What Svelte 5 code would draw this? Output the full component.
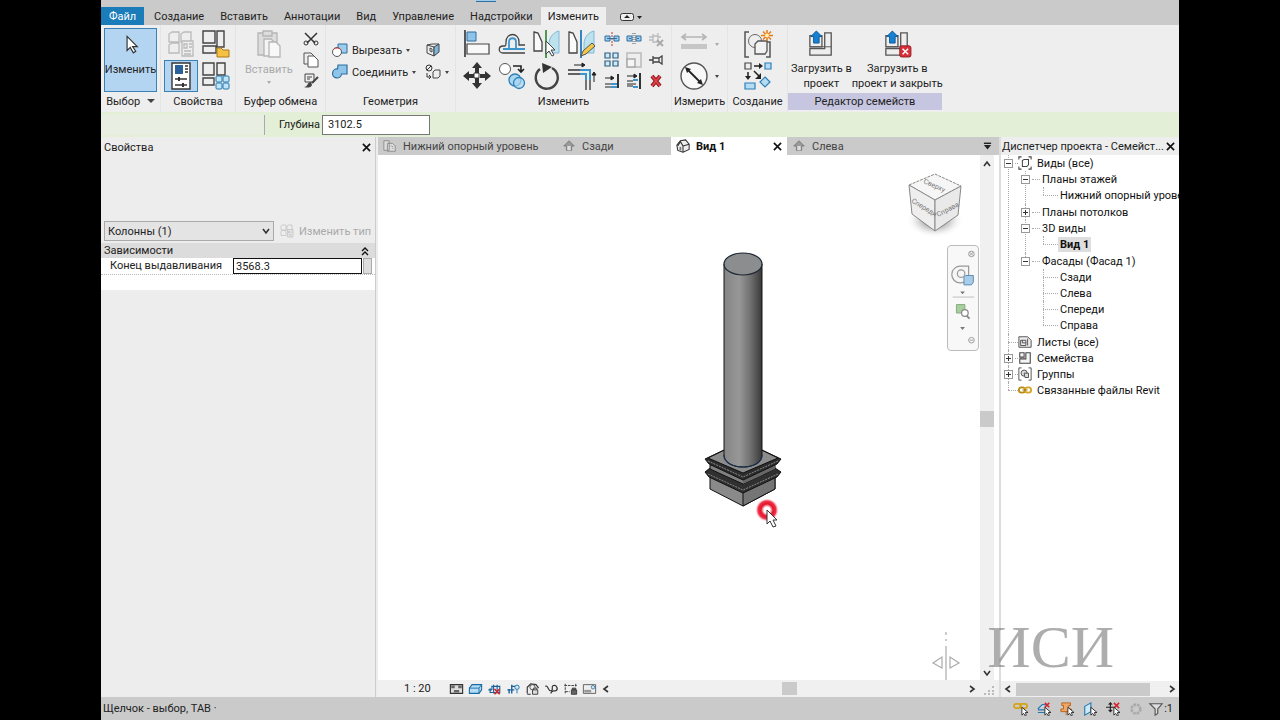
<script>
	let depth = $state('3102.5');
	let extrusionEnd = $state('3568.3');
	let category = $state('Колонны (1)');

	const menu = ['Создание', 'Вставить', 'Аннотации', 'Вид', 'Управление', 'Надстройки'];

	const house = '<path d="M2 8 8 2l6 6h-3v5H5V8z" fill="#999" stroke="#777"/><path d="M6 8h4v5H6z" fill="#ddd"/>';
	const pointer = '<path d="M9 6v9l2-2 2 3 1-1-1-3h3z" fill="#fff" stroke="#222"/>';
	const upload =
		'<path d="M2 5h13v12H2zM18 2h7v24H2v-7h16z" fill="#eee" stroke="#555" stroke-width="1.4"/><path d="M2 17h23" stroke="#555"/><path d="M9 0 15 6h-3v7H6V6H3z" fill="#1680d2" stroke="#0c5798"/>';

	const icons = {
		cursor: '<path d="M9 3v18l4-4 4 7 3-2-4-6h6z" fill="#fff" stroke="#333" stroke-width="1.5"/>',
		types:
			'<g fill="#eee" stroke="#bbb" stroke-width="1.3"><path d="M2 4l3-2h7v10H2zM14 4l3-2h7v10H14zM2 15l3-2h7v10H2z"/><path d="M15 11h11v15H15z"/><path d="M17 14h3v4h-3zM22 14h3M22 17h3M17 21h7M17 24h7"/></g>',
		family:
			'<g fill="#eee" stroke="#444" stroke-width="1.4"><path d="M1 1h12v12H1zM15 1h7v16h-7zM1 16h13v7H1z"/></g><path d="M15 18h4l2 2h6v7H15z" fill="#f6c044" stroke="#a87a14"/>',
		palette:
			'<path d="M5 1h18v26H5z" fill="#fff" stroke="#333" stroke-width="1.4"/><path d="M8 3h8v9H8z" fill="#2b6199"/><path d="M18 4h3M18 7h3M18 10h3M8 17h12M8 23h12" stroke="#333" stroke-width="1.4"/><path d="M12 15v4M16 21v4" stroke="#333" stroke-width="2"/>',
		parameters:
			'<g fill="#eee" stroke="#444" stroke-width="1.4"><path d="M1 1h11v12H1zM15 1h8v12h-8zM1 16h11v7H1z"/></g><g fill="#bfe3f8" stroke="#2779ad"><rect x="14" y="14" width="6" height="6" rx="1"/><rect x="21" y="14" width="6" height="6" rx="1"/><rect x="14" y="21" width="6" height="6" rx="1"/><rect x="21" y="21" width="6" height="6" rx="1"/></g>',
		paste:
			'<g fill="#ddd" stroke="#b5b5b5" stroke-width="1.3"><path d="M3 3h19v22H3z"/><path d="M8 1h9v5H8z"/><path d="M9 9h7l4 4v13H9z" fill="#f4f4f4"/><path d="M14 12h7l4 4v11H14z" fill="#f8f8f8"/></g>',
		cut: '<path d="M2 2l10 10M14 2 4 12" stroke="#333" stroke-width="1.5"/><circle cx="3" cy="12" r="2" fill="none" stroke="#333"/><circle cx="13" cy="12" r="2" fill="none" stroke="#333"/>',
		copy: '<path d="M1 1h7l3 3v8H1z" fill="#eee" stroke="#555"/><path d="M5 4h6l4 4v7H5z" fill="#fff" stroke="#555"/>',
		brush: '<path d="M2 1h9v8H2zM4 4h5M4 6h3" fill="#eee" stroke="#444"/><path d="M15 4 9 10" stroke="#444" stroke-width="2"/><path d="M1 14c4 0 3-5 7-5l1 3c-1 3-5 3-8 2z" fill="#444"/>',
		cutGeom: '<path d="M6 2h9v9H6z" fill="#9dccec" stroke="#2f6f9f"/><circle cx="5" cy="10" r="4.5" fill="#fff" stroke="#555"/><path d="M2 7a5 5 0 0 1 7 1" stroke="#c44" fill="none"/>',
		joinGeom: '<path d="M6 1h9v9H9.500a4.500 4.500 0 1 1-4-5z" fill="#8fc4ea" stroke="#2f6f9f" stroke-width="1.2"/>',
		face: '<path d="M2 3l7 2v9l-7-3z" fill="#eee" stroke="#444"/><path d="M9 5l5-3v8l-5 4z" fill="#7db6dd" stroke="#444"/><path d="M2 3l5-1 7 0" fill="none" stroke="#444"/><path d="M5 6l2 1v3l-2-1z" fill="#fff" stroke="#444"/>',
		split: '<circle cx="4" cy="4" r="3" fill="none" stroke="#333"/><path d="M2 6l4-4M2 9v4h4M4 11l2 2-2 2" fill="none" stroke="#333"/><path d="M8 8l2-2h5v6l-2 2H8z" fill="#eee" stroke="#444"/>',
		align: '<path d="M2 0v27" stroke="#333" stroke-width="1.600"/><path d="M4 2h9v9H4z" fill="#8fc4ea" stroke="#2f6f9f"/><path d="M4 14h22v10H4z" fill="#f8f8f8" stroke="#444" stroke-width="1.2"/>',
		offset: '<path d="M27 23H5c-5 0-5-7 0-7h2c1 0 1-1 1-4 0-10 13-10 13 0v3h6" fill="none" stroke="#444" stroke-width="1.300"/><path d="M27 19H5M11 19v-7c0-5 7-5 7 0v7" fill="none" stroke="#3c94cb" stroke-width="1.800"/>',
		mirrorPick: '<path d="M1 2l4 1 4 9v9H1z" fill="#fafafa" stroke="#444" stroke-width="1.300"/><path d="M26 1v22H16v-9c0-7 5-12 10-13z" fill="#bde2ee" stroke="#7fb9d8"/><path d="M13 0v28" stroke="#4c9a53" stroke-width="2"/><path d="M13 11v13l3-3 3 5 2-1-3-5h4z" fill="#fff" stroke="#444"/>',
		mirrorDraw: '<path d="M1 2l4 1 4 9v11H1z" fill="#fafafa" stroke="#444" stroke-width="1.300"/><path d="M26 1v22H16v-9c0-7 5-12 10-13z" fill="#bde2ee" stroke="#7fb9d8"/><path d="M13 0v28" stroke="#3685c0" stroke-width="2"/><path d="M13 26l2-5 9-8 3 3-9 8z" fill="#f2c84b" stroke="#555"/>',
		move: '<path d="M14 0l5 6h-3v5h-4V6H9zM14 27l5-6h-3v-5h-4v5H9zM0 14l6-5v3h5v4H6v3zM28 14l-6-5v3h-5v4h5v3z" fill="#333"/><path d="M11 11h5v5h-5z" fill="#fff" stroke="#333"/>',
		copyObj: '<circle cx="7" cy="7" r="5.500" fill="#fff" stroke="#555"/><path d="M15 4h8v5M20 7l3 3 3-3" fill="none" stroke="#222" stroke-width="1.600"/><circle cx="17" cy="18" r="6" fill="#a8d7f3" stroke="#2f7fb5" stroke-width="1.300"/><circle cx="21" cy="21" r="5.500" fill="#a8d7f3" fill-opacity=".7" stroke="#2f7fb5" stroke-width="1.300"/>',
		rotate: '<path d="M19 6a11 11 0 1 1-12 1" fill="none" stroke="#444" stroke-width="2.400"/><path d="M9 1l10 4-9 6z" fill="#333"/>',
		trim: '<path d="M0 8h12M0 12h12M18 18v10M22 18v10" stroke="#333" stroke-width="1.300"/><path d="M12 8h10v10M12 12h6v6" fill="none" stroke="#3c94cb" stroke-width="2"/><path d="M6 3h10M14 1l3 2-3 2zM26 20V11M24 13l2-3 2 3z" fill="#222" stroke="#222"/>',
		splitEl: '<path d="M1 5h5v5H1zM10 5h5v5h-5z" fill="#9dccec" stroke="#2f6f9f"/><path d="M8 1v14" stroke="#b33" stroke-dasharray="2 1"/><path d="M3 7.500h10" stroke="#2f6f9f"/>',
		splitGap: '<path d="M1 5h5v5H1zM10 5h5v5h-5z" fill="#9dccec" stroke="#2f6f9f"/><path d="M7 2v11M9 2v11" stroke="#555" stroke-dasharray="1 1"/><path d="M3 7.500h2M11 7.500h2" stroke="#2f6f9f"/>',
		unpin: '<path d="M1 6h4V3v9V9H1M5 5h5V2v9H5M10 6h3" fill="none" stroke="#bbb" stroke-width="1.300"/><path d="M9 9l6 6M15 9l-6 6" stroke="#aaa" stroke-width="2"/>',
		array: '<g fill="#cfeafa" stroke="#2f5f80" stroke-width="1.200"><path d="M1 1h5v5H1zM9 1h5v5H9zM1 9h5v5H1zM9 9h5v5H9z"/></g>',
		scale: '<path d="M1 1h14v14H1z" fill="#eee" stroke="#bbb" stroke-width="1.500"/><path d="M1 7h8v8H1z" fill="#f5f5f5" stroke="#aaa" stroke-width="1.500"/>',
		pin: '<path d="M1 8h4M5 4v8M5 6h6v4H5M11 6l3-2v8l-3-2" fill="none" stroke="#444" stroke-width="1.300"/>',
		trimOne: '<path d="M1 5h8M7 3l3 2-3 2zM1 11h6M1 14h6" fill="#222" stroke="#222"/><path d="M7 11h6M7 14h6" stroke="#3c94cb" stroke-width="2"/><path d="M14 1v14" stroke="#333" stroke-width="2"/>',
		trimMany: '<path d="M1 3h8M8 1l3 2-3 2zM1 8h6M1 13h6M1 11h9" fill="#222" stroke="#222"/><path d="M7 7h5M7 14h5" stroke="#3c94cb" stroke-width="2"/><path d="M14 0v16" stroke="#333" stroke-width="2"/>',
		remove: '<path d="M4 3l8 10M12 3 4 13" stroke="#8f1b20" stroke-width="4"/><path d="M4 3l8 10M12 3 4 13" stroke="#e2434a" stroke-width="2"/>',
		measure: '<path d="M2 7h24M6 4 2 7l4 3M22 4l4 3-4 3" fill="none" stroke="#b5b5b5" stroke-width="1.600"/><path d="M1 14h26v5H1z" fill="#c6c6c6"/>',
		dimension: '<circle cx="14" cy="14" r="13" fill="#f8f8f8" stroke="#555" stroke-width="1.400"/><path d="M7 7l14 14" stroke="#222" stroke-width="1.800"/><path d="M5 5l6 2-4 4zM23 23l-6-2 4-4z" fill="#222"/>',
		group: '<path d="M5 2H1v25h4M23 12h3v15h-4" fill="none" stroke="#555" stroke-width="1.500"/><circle cx="11" cy="11" r="6.500" fill="#eee" stroke="#666"/><path d="M11 14l3-3h9v10l-2 3H11z" fill="#f2f2f2" stroke="#555" stroke-width="1.300"/><path d="M23 0v11M17 5.500h12M19 1.500l8 8M27 1.500l-8 8" stroke="#e67a16" stroke-width="1.500"/><circle cx="23" cy="5.500" r="2" fill="#fff3b0"/>',
		similar: '<path d="M1 1h6v6H1z" fill="#eee" stroke="#444" stroke-width="1.200"/><path d="M10 4h7M4 10v5M10 9l5 5" stroke="#222" stroke-width="1.500"/><path d="M15 1l4 3-4 3zM1 14l3 4 3-4zM17 11v6h-6z" fill="#222"/><path d="M21 1h6v6h-6zM1 21h10v6H1zM21 15l5 5-5 5-5-5z" fill="#b4dcf5" stroke="#2f7fb5" stroke-width="1.200"/>',
		load: upload,
		loadClose: upload + '<rect x="17" y="16" width="12" height="12" rx="2" fill="#d8303b" stroke="#8f1b20"/><path d="M20 19l6 6M26 19l-6 6" stroke="#fff" stroke-width="1.500"/>',
		plan: '<path d="M1 2h6v11H1zM5 5h6l3 3v6H5z" fill="#ddd" stroke="#888"/><path d="M7 8h4v4" fill="none" stroke="#888" stroke-dasharray="1 1"/>',
		elevation: house,
		home3d: '<path d="M1 7l4-5 6-1 4 5v6l-7 3-6-2z" fill="#eee" stroke="#333" stroke-width="1.200"/><path d="M8 15V8L5 3 2 8M8 8l7-2" fill="none" stroke="#333" stroke-width="1.200"/><path d="M4 9h2v4H4z" fill="#777"/>',
		views: '<path d="M4 1H1v3M12 1h3v3M4 15H1v-3M12 15h3v-3M5 5l2-1h5v6l-2 2H5z" fill="none" stroke="#444" stroke-width="1.200"/>',
		sheets: '<path d="M1 2h10l4 4v8H1z" fill="#eee" stroke="#444"/><path d="M3 6h6v6H3zM5 6v3h4M11 4v8" fill="none" stroke="#444"/>',
		families: '<path d="M2 2h5v5H2zM9 2h5v12H2V9h7z" fill="#f4f4f4" stroke="#444" stroke-width="1.200"/>',
		groups: '<path d="M4 1H1v14h3M12 1h3v14h-3" fill="none" stroke="#444"/><circle cx="7" cy="7" r="3.500" fill="#ddd" stroke="#444"/><path d="M7 7h5v5H8z" fill="#ddd" stroke="#444"/>',
		links: '<rect x="1" y="5" width="7" height="6" rx="3" fill="none" stroke="#b98b12" stroke-width="2"/><rect x="8" y="5" width="7" height="6" rx="3" fill="none" stroke="#d3a321" stroke-width="2"/><path d="M5 8h6" stroke="#8a6508"/>',
		detail: '<path d="M1 3h14v10H1z" fill="#ddd" stroke="#333" stroke-width="1.300"/><path d="M2 4h4v3H2zM10 4h4v3h-4zM5 9h6v3H5z" fill="#666"/>',
		visual: '<path d="M1 7l3-4h11v6l-3 4H1z" fill="#b4dcf5" stroke="#176aa3" stroke-width="1.200"/><path d="M1 7h11v6M12 7l3-4" fill="none" stroke="#176aa3"/>',
		sunOff: '<path d="M1 9h4M3 7v5h11V5H5v4M7 3v10M11 3v10" fill="none" stroke="#1c6199" stroke-width="1.300"/><path d="M8 8l6 6M14 8l-6 6" stroke="#d3262e" stroke-width="2"/>',
		cropOff: '<path d="M1 9h4M3 8v5M6 3v10M6 5h4M6 9h3" fill="none" stroke="#1c6199" stroke-width="1.600"/><circle cx="12" cy="6" r="2.500" fill="#cfe9f8" stroke="#176aa3"/><path d="M12 9v4" stroke="#176aa3"/>',
		lock3d: '<path d="M2 13V6l4-4 6 1 3 4M6 14H2" fill="#eee" stroke="#333" stroke-width="1.300"/><circle cx="8" cy="6" r="3" fill="none" stroke="#444"/><path d="M8 9h6v5H8zM9 9V7h4v2" fill="#ddd" stroke="#333"/>',
		glasses: '<path d="M1 5c3-2 3 5 6 5 4 0 0-5 3-6 4-1 6 4 3 6-3 1-3-2-6 3" fill="none" stroke="#333" stroke-width="1.400"/>',
		reveal: '<path d="M1 4h14M2 2v12M14 2v4M2 11h5" fill="none" stroke="#333" stroke-dasharray="3 1"/><path d="M9 9h6v5H9zM10 9V7h4v2" fill="#666" stroke="#333"/>',
		display: '<path d="M1 3h14v10H1z" fill="#eee" stroke="#555"/><path d="M2 9h8v3H2z" fill="#999"/><circle cx="12" cy="6" r="2" fill="#cfe9f8" stroke="#3a7ab0"/>',
		selLinks: '<rect x="0" y="2" width="8" height="5" rx="2.500" fill="none" stroke="#d6a316" stroke-width="2"/><rect x="7" y="2" width="8" height="5" rx="2.500" fill="none" stroke="#d6a316" stroke-width="2"/>' + pointer,
		selUnder: '<path d="M1 8l5-5h5M1 12h12M1 9h8" fill="#d5ecfa" stroke="#2779ad" stroke-width="1.400"/><path d="M9 1l5 5M14 1 9 6" stroke="#d3262e" stroke-width="1.800"/>' + pointer,
		selPinned: '<path d="M2 1h10v3h-2v4h3v3H1V8h3V4H2zM7 11v4" fill="#f1a664" stroke="#b25c14"/>' + pointer,
		selFace: '<path d="M2 5l7-4v10l-7 4z" fill="#cfe9f8" stroke="#2779ad" stroke-width="1.300"/>' + pointer,
		dragSel: '<path d="M5 1v10M0 6h10M3 3l2-2 2 2M3 9l2 2 2-2" fill="none" stroke="#222" stroke-width="1.300"/><path d="M9 1l6 6M15 1 9 7" stroke="#d3262e" stroke-width="1.800"/>' + pointer,
		process: '<circle cx="8" cy="8" r="5" fill="none" stroke="#aaa" stroke-width="3" stroke-dasharray="3 1"/>',
		filter: '<path d="M1 2h14L10 8v5l-3 2V8z" fill="#ddd" stroke="#555" stroke-width="1.300"/>'
	};

	const smallTools = ['splitEl', 'splitGap', 'unpin', 'array', 'scale', 'pin', 'trimOne', 'trimMany', 'remove'];
	const bigTools = ['align', 'offset', 'mirrorPick', 'mirrorDraw', 'move', 'copyObj', 'rotate', 'trim'];
	const viewControls = ['detail', 'visual', 'sunOff', 'cropOff', 'lock3d', 'glasses', 'reveal', 'display'];
	const statusTools = ['selLinks', 'selUnder', 'selPinned', 'selFace', 'dragSel', 'process', 'filter'];

	const tree = [
		{
			label: 'Виды (все)', icon: 'views', sign: '−',
			children: [
				{ label: 'Планы этажей', sign: '−', children: [{ label: 'Нижний опорный уровень' }] },
				{ label: 'Планы потолков', sign: '+' },
				{ label: '3D виды', sign: '−', children: [{ label: 'Вид 1', active: true }] },
				{
					label: 'Фасады (Фасад 1)', sign: '−',
					children: [{ label: 'Сзади' }, { label: 'Слева' }, { label: 'Спереди' }, { label: 'Справа' }]
				}
			]
		},
		{ label: 'Листы (все)', icon: 'sheets' },
		{ label: 'Семейства', icon: 'families', sign: '+' },
		{ label: 'Группы', icon: 'groups', sign: '+' },
		{ label: 'Связанные файлы Revit', icon: 'links' }
	];
</script>

{#snippet big(name)}
	<svg class="ico-big" viewBox="0 0 28 28" fill="none" aria-hidden="true">{@html icons[name]}</svg>
{/snippet}

{#snippet small(name)}
	<svg class="ico" viewBox="0 0 16 16" fill="none" aria-hidden="true">{@html icons[name]}</svg>
{/snippet}

{#snippet chevron(dir)}
	<svg class="chevron {dir}" viewBox="0 0 10 10" aria-hidden="true"><path d="M2 7l3-4 3 4" fill="none" stroke="#333" stroke-width="1.6" /></svg>
{/snippet}

{#snippet cross()}
	<svg class="cross" viewBox="0 0 10 10" aria-hidden="true"><path d="M1 1l8 8M9 1 1 9" stroke="#111" stroke-width="1.8" /></svg>
{/snippet}

{#snippet branch(nodes)}
	<ul>
		{#each nodes as node}
			<li>
				<div class="row">
					<span class="node">
						{#if node.sign}
							<button class="toggle" aria-label={node.label}>
								<svg viewBox="0 0 7 7"><path d={node.sign === '+' ? 'M1 3.5h5M3.500 1v5' : 'M1 3.5h5'} stroke="#333" /></svg>
							</button>
						{/if}
					</span>
					<span class="link" class:leaf={!node.sign} class:short={node.icon}></span>
					{#if node.icon}{@render small(node.icon)}{/if}
					<span class="name" class:active={node.active} class:wide={node.icon}>{node.label}</span>
				</div>
				{#if node.children}{@render branch(node.children)}{/if}
			</li>
		{/each}
	</ul>
{/snippet}

<div class="screen">
	<div class="app">
		<div class="title-strip"><span class="title-mark"></span></div>
		<nav class="menu">
			<button class="file">Файл</button>
			{#each menu as item}
				<button>{item}</button>
			{/each}
			<button class="current">Изменить</button>
			<button class="collapse" aria-label="Свернуть ленту">
				<svg viewBox="0 0 22 8"><rect x=".5" y=".5" width="13" height="7" rx="2" fill="#eee" stroke="#333" /><path d="M4 5l3-3 3 3zM17 3h5l-2.500 3z" fill="#222" /></svg>
			</button>
		</nav>

		<div class="ribbon">
			<section class="group select">
				<div class="body">
					<button class="tool tall on">{@render big('cursor')}<span>Изменить</span></button>
				</div>
				<h2>Выбор <i class="caret wide"></i></h2>
			</section>
			<section class="group props">
				<div class="body quad">
					<button class="tool" aria-label="Типоразмеры" disabled>{@render big('types')}</button>
					<button class="tool" aria-label="Категория семейства">{@render big('family')}</button>
					<button class="tool on" aria-label="Свойства">{@render big('palette')}</button>
					<button class="tool" aria-label="Параметры">{@render big('parameters')}</button>
				</div>
				<h2>Свойства</h2>
			</section>
			<section class="group clipboard">
				<div class="body">
					<button class="tool tall" disabled>{@render big('paste')}<span>Вставить</span><i class="caret"></i></button>
					<div class="stack">
						{#each ['cut', 'copy', 'brush'] as name}
							<button class="tool" aria-label={name}>{@render small(name)}</button>
						{/each}
					</div>
				</div>
				<h2>Буфер обмена</h2>
			</section>
			<section class="group geometry">
				<div class="body lines">
					<div class="line">
						<button class="tool text">{@render small('cutGeom')}Вырезать<i class="caret"></i></button>
						<button class="tool face" aria-label="Грань">{@render small('face')}</button>
					</div>
					<div class="line">
						<button class="tool text">{@render small('joinGeom')}Соединить<i class="caret"></i></button>
						<button class="tool text" aria-label="Разделить грань">{@render small('split')}<i class="caret"></i></button>
					</div>
				</div>
				<h2>Геометрия</h2>
			</section>
			<section class="group modify">
				<div class="body">
					<div class="big-grid">
						{#each bigTools as name}
							<button class="tool" aria-label={name}>{@render big(name)}</button>
						{/each}
					</div>
					<div class="small-grid">
						{#each smallTools as name}
							<button class="tool" aria-label={name}>{@render small(name)}</button>
						{/each}
					</div>
				</div>
				<h2>Изменить</h2>
			</section>
			<section class="group measure">
				<div class="body column">
					<button class="tool text" aria-label="Измерить" disabled>{@render big('measure')}<i class="caret"></i></button>
					<button class="tool text" aria-label="Размер">{@render big('dimension')}<i class="caret"></i></button>
				</div>
				<h2>Измерить</h2>
			</section>
			<section class="group create">
				<div class="body column">
					<button class="tool" aria-label="Создать группу">{@render big('group')}</button>
					<button class="tool" aria-label="Создать аналог">{@render big('similar')}</button>
				</div>
				<h2>Создание</h2>
			</section>
			<section class="group editor">
				<div class="body">
					<button class="tool tall">{@render big('load')}<span>Загрузить в<br />проект</span></button>
					<button class="tool tall">{@render big('loadClose')}<span>Загрузить в<br />проект и закрыть</span></button>
				</div>
				<h2>Редактор семейств</h2>
			</section>
		</div>

		<div class="options">
			<span class="blank"></span>
			<label for="depth">Глубина</label>
			<input id="depth" bind:value={depth} />
		</div>

		<div class="work">
			<aside class="properties">
				<header>Свойства <button aria-label="Закрыть">{@render cross()}</button></header>
				<div class="picker">
					<div class="combo">
						<select bind:value={category} aria-label="Категория">
							<option>Колонны (1)</option>
						</select>
						{@render chevron('down')}
					</div>
					<button class="edit-type" disabled>
						<svg class="ico" viewBox="0 0 28 28" aria-hidden="true">{@html icons.types}</svg>Изменить тип
					</button>
				</div>
				<div class="section-title">
					Зависимости
					<svg viewBox="0 0 8 10" aria-hidden="true"><path d="M1 5l3-3 3 3M1 9l3-3 3 3" fill="none" stroke="#111" stroke-width="1.4" /></svg>
				</div>
				<div class="param">
					<label for="end">Конец выдавливания</label>
					<input id="end" bind:value={extrusionEnd} />
					<button aria-label="Связать параметр"></button>
				</div>
				<div class="param-rest"></div>
			</aside>

			<main class="views">
				<div class="tabs">
					<button class="tab first">{@render small('plan')}Нижний опорный уровень</button>
					<button class="tab second">{@render small('elevation')}Сзади</button>
					<button class="tab open">{@render small('home3d')}Вид 1 {@render cross()}</button>
					<button class="tab last">{@render small('elevation')}Слева</button>
					<button class="more" aria-label="Список видов">
						<svg viewBox="0 0 10 8"><path d="M1 1h8" stroke="#222" stroke-width="1.6" /><path d="M1 3h8L5 8z" fill="#222" /></svg>
					</button>
				</div>
				<div class="stage">
					<div class="canvas">
						<svg class="model" viewBox="0 0 80 260" aria-hidden="true">
							<defs>
								<linearGradient id="shaft"><stop offset="0" stop-color="#858585" /><stop offset=".4" stop-color="#979797" /><stop offset=".7" stop-color="#707070" /><stop offset="1" stop-color="#383838" /></linearGradient>
							</defs>
							<path d="M6 224v13l33 17 32-17v-13z" fill="#8a8a8a" stroke="#111" />
							<path d="M39 237v17l32-17v-13z" fill="#757575" stroke="#111" />
							<path d="M1 220l4 5 34 16 34-16 4-5-6-4H6z" fill="#303030" stroke="#111" />
							<path d="M4 222l35 16 35-16" fill="none" stroke="#888" stroke-dasharray="2 1" />
							<path d="M6 213v4l33 15 32-15v-4z" fill="#808080" stroke="#111" />
							<path d="M39 228v4l32-15v-4z" fill="#666" />
							<path d="M1 207l4 5 34 16 34-16 4-5-38-18z" fill="#2c2c2c" stroke="#111" />
							<path d="M4 209l35 16 35-16" fill="none" stroke="#888" stroke-dasharray="2 1" />
							<path d="M4 206l35-17 35 17-35 15z" fill="#8c8c8c" stroke="#111" />
							<path d="M20 12v191c0 16 38 16 38 0V12z" fill="url(#shaft)" stroke="#161616" />
							<path d="M20 203c0 16 38 16 38 0" fill="none" stroke="#17304d" stroke-width="1.2" />
							<ellipse cx="39" cy="12" rx="19" ry="11" fill="#8b8d8e" stroke="#1c2530" stroke-width="1.2" />
						</svg>
						<svg class="click" viewBox="0 0 26 30" aria-hidden="true">
							<defs><radialGradient id="spot"><stop offset=".25" stop-color="#fff" /><stop offset=".5" stop-color="#e5142b" /><stop offset=".75" stop-color="#ee3347" /><stop offset="1" stop-color="#fff" stop-opacity="0" /></radialGradient></defs>
							<circle cx="12" cy="12" r="12" fill="url(#spot)" />
							<path d="M12 12v14l3-3 3 6 3-1-3-6h4z" fill="#fff" stroke="#333" />
						</svg>
						<svg class="cube" viewBox="0 0 60 66" aria-hidden="true">
							<defs><radialGradient id="shade"><stop offset=".3" stop-color="#999" /><stop offset="1" stop-color="#fff" stop-opacity="0" /></radialGradient></defs>
							<ellipse cx="30" cy="48" rx="29" ry="18" fill="url(#shade)" />
							<path d="M4 13 30 2l26 12-26 14z" fill="#f6f6f6" stroke="#888" stroke-dasharray="3 1" />
							<path d="M4 13l26 15v31L7 42z" fill="#eee" stroke="#888" />
							<path d="M56 14 30 28v31l23-16z" fill="#e9e9e9" stroke="#888" />
							<text x="18" y="11" transform="rotate(24 18 11)">Сверху</text>
							<text x="6" y="30" transform="rotate(32 6 30)">Спереди</text>
							<text x="33" y="45" transform="rotate(-27 33 45)">Справа</text>
						</svg>
						<div class="navbar">
							<svg viewBox="0 0 32 106" aria-hidden="true">
								<g fill="none" stroke="#999"><circle cx="25" cy="6" r="3" /><path d="M23 4l4 4M27 4l-4 4" /><circle cx="25" cy="98" r="3" /><path d="M23 98h4" /></g>
								<path d="M14 19h8v8a9 9 0 1 1-8-8z" fill="#f6f6f6" stroke="#999" stroke-width="1.3" />
								<circle cx="14" cy="27" r="4" fill="none" stroke="#999" stroke-width="1.3" />
								<path d="M17 31l2-2h8v7l-2 3h-8z" fill="#a8cdea" stroke="#5888af" />
								<path d="M13 46h5l-2.500 3zM13 84h5l-2.500 3z" fill="#777" />
								<path d="M5 52h23" stroke="#bbb" />
								<path d="M9 60h9v9H9z" fill="#a6cf9d" stroke="#83a77b" />
								<circle cx="18" cy="69" r="3.500" fill="#fff" stroke="#888" stroke-width="1.3" /><path d="M20 72l3 3" stroke="#888" stroke-width="2" />
							</svg>
						</div>
						<svg class="section-mark" viewBox="0 0 28 48" aria-hidden="true"><path d="M14 0v3M14 7v2M14 14v34M10 25v11L1 31zM18 25v11l9-5z" fill="none" stroke="#aaa" stroke-width="1.2" /></svg>
					</div>
					<div class="vscroll">{@render chevron('up')}<span class="thumb"></span>{@render chevron('down')}</div>
				</div>
				<div class="controls">
					<span class="scale">1 : 20</span>
					{#each viewControls as name}
						<button aria-label={name}>{@render small(name)}</button>
					{/each}
					<div class="hscroll">{@render chevron('left')}<span class="thumb"></span>{@render chevron('right')}</div>
					<svg class="grip" viewBox="0 0 16 16" aria-hidden="true"><path d="M11 5h2v2h-2zM7 9h2v2H7zM11 9h2v2h-2zM3 12h2v2H3zM7 12h2v2H7zM11 12h2v2h-2z" fill="#bbb" /></svg>
				</div>
			</main>

			<aside class="browser">
				<header>Диспетчер проекта - Семейст... <button aria-label="Закрыть">{@render cross()}</button></header>
				<div class="tree">{@render branch(tree)}</div>
				<div class="hscroll">{@render chevron('left')}<span class="thumb long"></span>{@render chevron('right')}</div>
			</aside>
			<div class="watermark">ИСИ</div>
		</div>

		<footer class="status">
			<span class="hint">Щелчок - выбор, TAB ·</span>
			{#each statusTools as name}
				<button aria-label={name}>{@render small(name)}</button>
			{/each}
			<span class="count">:1</span>
		</footer>
	</div>
</div>

<style>
	:global(body) {
		margin: 0;
		background: #000;
	}

	.screen {
		height: 100vh;
		padding: 0 101px;
		box-sizing: border-box;
		background: #000;
		font-family: Roboto, 'Noto Sans', sans-serif;
		font-size: 11px;
		line-height: 15px;
		color: #222;
	}

	.app {
		height: 100%;
		display: flex;
		flex-direction: column;
		background: #ededed;
		overflow: hidden;
	}

	button,
	input,
	select {
		font: inherit;
		color: inherit;
		margin: 0;
		padding: 0;
		border: 0;
		border-radius: 0;
		background: none;
		box-sizing: border-box;
	}

	svg {
		display: block;
		flex: none;
		overflow: visible;
	}

	.ico-big {
		width: 28px;
		height: 28px;
	}

	.ico {
		width: 14px;
		height: 14px;
	}

	.ribbon .ico {
		width: 16px;
		height: 16px;
	}

	.chevron {
		width: 10px;
		height: 10px;
	}

	.chevron.down {
		transform: rotate(180deg);
	}

	.chevron.left {
		transform: rotate(-90deg);
	}

	.chevron.right {
		transform: rotate(90deg);
	}

	.cross {
		width: 9px;
		height: 9px;
	}

	.caret {
		display: inline-block;
		border: 2px solid transparent;
		border-top: 3px solid #444;
		border-bottom: 0;
	}

	.caret.wide {
		border-width: 4px 4px 0;
		margin-left: 4px;
		vertical-align: 2px;
	}

	/* menu */
	.title-strip {
		height: 7px;
		background: #cacaca;
		display: flex;
		flex: none;
	}

	.title-mark {
		width: 20px;
		height: 2px;
		margin-left: 375px;
		box-sizing: border-box;
		background: #9dccec;
		border-bottom: 1px solid #2f6f9f;
	}

	.menu {
		display: flex;
		flex: none;
		height: 18px;
		background: #cacaca;
	}

	.menu button {
		padding: 1px 8px 0;
	}

	.menu .file {
		background: #1b7cba;
		color: #fff;
		width: 43px;
		padding: 1px 0 0;
		margin-right: 2px;
	}

	.menu .current {
		background: #eee;
		padding: 1px 7px 0;
	}

	.collapse svg {
		width: 22px;
		height: 8px;
		margin-left: 6px;
	}

	/* ribbon */
	.ribbon {
		display: flex;
		flex: none;
		height: 87px;
		background: #eee;
	}

	.group {
		display: flex;
		flex-direction: column;
		box-sizing: border-box;
		border-right: 1px solid #e4e4e4;
	}

	.group h2 {
		margin: 0;
		font-size: 11px;
		font-weight: normal;
		line-height: 17px;
		text-align: center;
		white-space: nowrap;
	}

	.body {
		display: flex;
		height: 66px;
		padding: 3px 3px 0;
		box-sizing: border-box;
		margin-bottom: 2px;
	}

	.tool {
		display: flex;
		align-items: center;
		justify-content: center;
	}

	.tool:disabled {
		color: #aaa;
	}

	.tool:disabled .caret {
		border-top-color: #aaa;
	}

	.tool.tall {
		flex-direction: column;
		justify-content: flex-start;
		padding-top: 2px;
		gap: 4px;
		white-space: nowrap;
	}

	.tool.on {
		background: #b4d5f2;
		box-shadow: inset 0 0 0 1px #3a81b8;
	}

	.tool.text {
		gap: 4px;
	}

	.select {
		width: 60px;
	}

	.select .tool {
		width: 54px;
		height: 64px;
		padding-top: 6px;
		gap: 6px;
	}

	.select .ico-big {
		width: 22px;
		height: 22px;
	}

	.props {
		width: 75px;
	}

	.quad {
		display: grid;
		grid-template-columns: 34px 34px;
		grid-template-rows: 32px 32px;
		column-gap: 1px;
	}

	.clipboard {
		width: 90px;
	}

	.clipboard .body {
		justify-content: space-between;
		padding: 3px 6px 0 9px;
	}

	.stack {
		display: grid;
		grid-auto-rows: 21px;
		align-content: start;
	}

	.geometry {
		width: 130px;
	}

	.lines {
		flex-direction: column;
		padding: 14px 6px 0;
	}

	.line {
		display: flex;
		justify-content: space-between;
		height: 22px;
	}

	.face {
		margin-right: 8px;
	}

	.modify {
		width: 216px;
	}

	.modify .body {
		padding: 3px 4px 0 7px;
		justify-content: space-between;
	}

	.big-grid {
		display: grid;
		grid-template: 32px 32px / repeat(4, 28px);
		column-gap: 7px;
	}

	.small-grid {
		display: grid;
		grid-template: repeat(3, 21px) / repeat(3, 22px);
	}

	.measure {
		width: 56px;
	}

	.column {
		display: grid;
		grid-template-rows: 32px 32px;
	}

	.measure .tool {
		gap: 7px;
	}

	.create {
		width: 60px;
	}

	.editor {
		width: 154px;
		border: 0;
	}

	.editor .body {
		justify-content: space-between;
		padding: 3px 3px 0;
	}

	.editor .ico-big {
		width: 26px;
		height: 26px;
	}

	.editor .tool {
		padding-top: 3px;
		gap: 4px;
	}

	.editor h2 {
		background: #c6c6e1;
	}

	/* options bar */
	.options {
		display: flex;
		align-items: center;
		flex: none;
		height: 25px;
		background: #e3efd6;
	}

	.blank {
		width: 164px;
		height: 20px;
		margin-right: 14px;
		background: #e8eee2;
		border-right: 1px solid #aaa;
		box-sizing: border-box;
	}

	.options label {
		width: 43px;
	}

	.options input {
		width: 108px;
		height: 20px;
		padding: 0 5px;
		background: #fff;
		border: 1px solid #777;
	}

	/* work area */
	.work {
		flex: 1;
		min-height: 0;
		display: flex;
		position: relative;
	}

	header {
		display: flex;
		align-items: center;
		justify-content: space-between;
		height: 20px;
		padding: 0 4px 0 3px;
		white-space: nowrap;
	}

	.properties {
		width: 274px;
		flex: none;
		border-right: 1px solid #ccc;
		margin-right: 2px;
	}

	.picker {
		display: flex;
		align-items: center;
		gap: 6px;
		padding: 64px 3px 2px;
	}

	.combo {
		position: relative;
		flex: none;
		width: 170px;
	}

	.combo select {
		width: 100%;
		height: 20px;
		padding: 0 3px;
		appearance: none;
		background: #e4e4e4;
		border: 1px solid #aaa;
	}

	.combo .chevron {
		position: absolute;
		right: 3px;
		top: 5px;
	}

	.edit-type {
		display: flex;
		align-items: center;
		gap: 5px;
		color: #aaa;
		white-space: nowrap;
	}

	.section-title {
		display: flex;
		align-items: center;
		justify-content: space-between;
		padding: 0 6px 0 3px;
		height: 15px;
		background: #dcdcdc;
	}

	.section-title svg {
		width: 8px;
		height: 10px;
	}

	.param {
		display: flex;
		height: 16px;
		background: #fff;
		border-bottom: 1px dotted #bbb;
	}

	.param label {
		width: 132px;
		padding-left: 9px;
		box-sizing: border-box;
		white-space: nowrap;
		flex: none;
	}

	.param input {
		width: 129px;
		height: 16px;
		padding: 0 2px;
		border: 1px solid #111;
		background: #fff;
	}

	.param button {
		width: 9px;
		margin-left: 1px;
		background: #ddd;
		border: 1px solid #aaa;
	}

	.param-rest {
		height: 15px;
		background: #fff;
	}

	.views {
		flex: 1;
		min-width: 0;
		display: flex;
		flex-direction: column;
	}

	.tabs {
		display: flex;
		flex: none;
		height: 18px;
		background: #cacaca;
		color: #444;
	}

	.tab {
		display: flex;
		align-items: center;
		gap: 6px;
		padding: 0 5px;
		white-space: nowrap;
	}

	.first {
		width: 179px;
	}

	.second {
		width: 114px;
	}

	.open {
		width: 116px;
		background: #fff;
		color: #111;
		font-weight: bold;
	}

	.open .cross {
		margin-left: auto;
	}

	.more {
		margin-left: auto;
		padding: 0 7px;
	}

	.more svg {
		width: 9px;
		height: 8px;
	}

	.stage {
		flex: 1;
		min-height: 0;
		display: flex;
		background: #fff;
	}

	.canvas {
		flex: 1;
		position: relative;
	}

	.model {
		position: absolute;
		left: 326px;
		top: 97px;
		width: 80px;
		height: 260px;
	}

	.click {
		position: absolute;
		left: 377px;
		top: 343px;
		width: 26px;
		height: 30px;
	}

	.cube {
		position: absolute;
		right: 15px;
		top: 17px;
		width: 60px;
		height: 66px;
	}

	.cube text {
		font-size: 7px;
		fill: #777;
	}

	.navbar {
		position: absolute;
		right: 1px;
		top: 90px;
		width: 30px;
		height: 104px;
		border: 1px solid #bbb;
		border-radius: 4px;
		background: #f8f8f8;
	}

	.navbar svg {
		width: 30px;
		height: 104px;
	}

	.section-mark {
		position: absolute;
		right: 20px;
		bottom: 0;
		width: 28px;
		height: 48px;
	}

	.vscroll {
		width: 14px;
		margin-right: 5px;
		padding: 4px 0 2px;
		display: flex;
		flex-direction: column;
		align-items: center;
		justify-content: space-between;
		background: #f0f0f0;
	}

	.vscroll .thumb {
		width: 14px;
		height: 16px;
		background: #cacaca;
	}

	.controls {
		display: flex;
		align-items: center;
		flex: none;
		height: 17px;
		background: #f0f0f0;
	}

	.scale {
		width: 71px;
		padding-left: 26px;
		box-sizing: border-box;
	}

	.controls button {
		width: 19px;
	}

	.controls button .ico {
		width: 15px;
	}

	.hscroll {
		flex: 1;
		display: flex;
		align-items: center;
		justify-content: space-between;
		height: 14px;
		padding: 0 4px 0 0;
		background: #f0f0f0;
	}

	.hscroll .thumb {
		width: 15px;
		height: 13px;
		background: #cacaca;
	}

	.hscroll .thumb.long {
		width: 134px;
		margin-right: 14px;
	}

	.grip {
		width: 16px;
		height: 16px;
		margin-right: 2px;
	}

	.browser {
		width: 180px;
		flex: none;
		display: flex;
		flex-direction: column;
		border-left: 2px solid #ddd;
		box-sizing: border-box;
		background: #fff;
	}

	.browser header {
		height: 18px;
		padding: 0 4px 0 1px;
		background: #eee;
	}

	.browser .hscroll {
		flex: none;
		height: 16px;
		padding: 0 2px;
	}

	.tree {
		flex: 1;
		min-height: 0;
		overflow: hidden;
	}

	ul {
		margin: 0;
		padding: 0;
		list-style: none;
	}

	li ul {
		margin-left: 17px;
	}

	li li ul {
		margin-left: 18px;
		padding-bottom: 1px;
	}

	li {
		position: relative;
	}

	li::before {
		content: '';
		position: absolute;
		left: 7px;
		top: 0;
		bottom: 0;
		border-left: 1px dotted #aaa;
	}

	li:last-child::before {
		bottom: auto;
		height: 8px;
	}

	.row {
		display: flex;
		align-items: center;
		height: 16px;
		white-space: nowrap;
	}

	.node {
		width: 14px;
		display: flex;
		justify-content: center;
		flex: none;
	}

	.toggle {
		position: relative;
		width: 9px;
		height: 9px;
		background: #fff;
		border: 1px solid #999;
	}

	.toggle svg {
		width: 7px;
		height: 7px;
	}

	.link {
		width: 8px;
		flex: none;
		border-top: 1px dotted #aaa;
	}

	.link.leaf {
		width: 15px;
		margin-left: -7px;
	}

	.link.short {
		width: 3px;
	}

	.link.leaf.short {
		width: 10px;
	}

	.name {
		padding: 0 2px;
		color: #111;
	}

	.name.wide {
		padding: 0 5px;
	}

	.name.active {
		font-weight: bold;
		background: #dedede;
	}

	.watermark {
		position: absolute;
		right: 65px;
		bottom: 10px;
		font-family: 'Liberation Serif', serif;
		font-size: 60px;
		line-height: 80px;
		color: #777;
		opacity: 0.6;
		pointer-events: none;
	}

	.status {
		display: flex;
		align-items: center;
		flex: none;
		height: 23px;
		padding: 0 6px 0 2px;
		background: #cacaca;
	}

	.hint {
		flex: 1;
	}

	.status button {
		width: 23px;
		display: flex;
		justify-content: center;
	}

	.status button:last-of-type {
		width: 17px;
	}
</style>
